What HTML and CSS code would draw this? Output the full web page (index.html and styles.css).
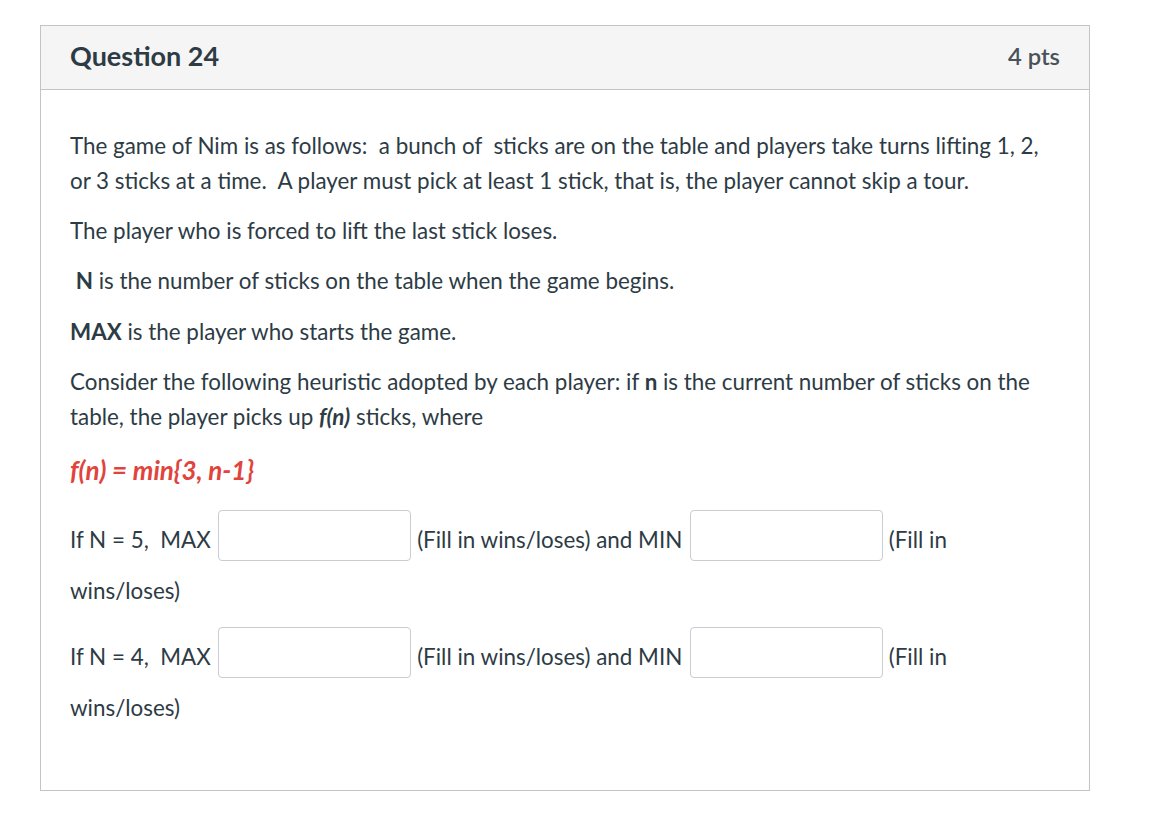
FILE: index.html
```html
<!DOCTYPE html>
<html>
<head>
<meta charset="utf-8">
<link rel="stylesheet" href="styles.css">
</head>
<body>
<div class="card">
  <div class="card-header">
    <span class="q-title">Question 24</span>
    <span class="q-pts">4 pts</span>
  </div>
  <div class="card-body">
    <p>The game of Nim is as follows:&nbsp; a bunch of&nbsp; sticks are on the table and players take turns lifting 1, 2, or 3 sticks at a time.&nbsp; A player must pick at least 1 stick, that is, the player cannot skip a tour.</p>
    <p>The player who is forced to lift the last stick loses.</p>
    <p>&nbsp;<strong>N</strong> is the number of sticks on the table when the game begins.</p>
    <p><strong>MAX</strong> is the player who starts the game.</p>
    <p>Consider the following heuristic adopted by each player: if <strong>n</strong> is the current number of sticks on the table, the player picks up <strong><em>f(n)</em></strong> sticks, where</p>
    <p class="formula">f(n) = min{3, n-1}</p>
    <p class="fill">If N = 5,&nbsp; MAX <input class="blank" type="text"> (Fill in wins/loses) and MIN <input class="blank" type="text"> (Fill in wins/loses)</p>
    <p class="fill">If N = 4,&nbsp; MAX <input class="blank" type="text"> (Fill in wins/loses) and MIN <input class="blank" type="text"> (Fill in wins/loses)</p>
  </div>
</div>
</body>
</html>
```
FILE: styles.css
```css
html, body {
  margin: 0;
  padding: 0;
  background: #ffffff;
}
body {
  padding: 25px 0 0 40px;
  font-family: Lato, "Liberation Sans", sans-serif;
  color: #2d3b45;
}
.card {
  width: 1048px;
  border: 1px solid #c4c4c4;
  background: #fff;
}
.card-header {
  display: flex;
  justify-content: space-between;
  align-items: center;
  height: 64px;
  box-sizing: border-box;
  padding: 0 29px 4px 29px;
  background: #f5f5f5;
  border-bottom: 1px solid #c4c4c4;
}
.q-title {
  font-size: 27px;
  font-weight: 700;
  color: #2d3b45;
}
.q-pts {
  font-size: 23.8px;
  font-weight: 600;
  color: #4a5158;
  padding-top: 1px;
}
.card-body {
  padding: 39px 29px 64px 29px;
  font-size: 22.4px;
  line-height: 34.8px;
}
.card-body p {
  margin: 0 0 15.5px 0;
}
.card-body p:last-child {
  margin-bottom: 0;
}
.card-body p.formula {
  color: #e0443c;
  font-weight: 700;
  font-style: italic;
  font-size: 26px;
  line-height: 41px;
  margin-bottom: 18.5px;
}
.card-body p.fill + p.fill {
  margin-top: 19px;
}
.blank {
  display: inline-block;
  vertical-align: middle;
  width: 193px;
  height: 51px;
  box-sizing: border-box;
  margin: 0 0 13px 2px;
  border: 1px solid #c7cdd1;
  border-radius: 4px;
  background: #fff;
  font-size: 20px;
}
```
